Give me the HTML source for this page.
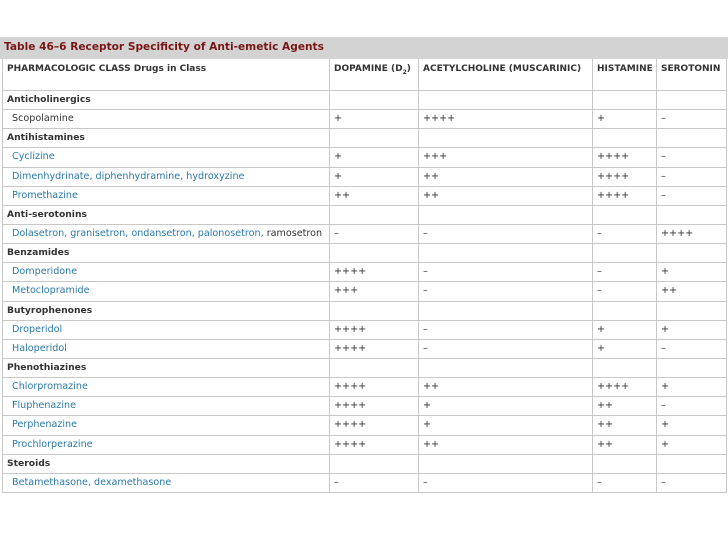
<!DOCTYPE html>
<html><head><meta charset="utf-8"><style>
body{margin:0;width:728px;height:546px;background:#fff;position:relative;overflow:hidden;font-family:"DejaVu Sans","Liberation Sans",sans-serif;font-size:9.6px;color:#333}
.title{position:absolute;left:0;top:37px;width:728px;height:22px;background:#d3d3d3;color:#7a1616;font-weight:bold;font-size:10.6px;line-height:20px;padding-left:4px;box-sizing:border-box}
.r{position:absolute;left:2px;width:724px;display:grid;grid-template-columns:327px 89px 174px 64px 70px;border-left:1px solid #c8c8c8;box-sizing:border-box}
.r div{border-right:1px solid #c8c8c8;border-bottom:1px solid #c8c8c8;padding-left:4px;line-height:18px;white-space:nowrap;overflow:hidden}
.h div{font-weight:bold;line-height:20px;font-size:9px}
.c{font-weight:bold;font-size:9.2px}
.d{padding-left:9px!important;color:#2a7aa8}
.k{color:#333}
sub{font-size:6px}
</style></head><body>
<div class="title">Table 46–6 Receptor Specificity of Anti-emetic Agents</div>
<div class="r h" style="top:59px;height:32px"><div>PHARMACOLOGIC CLASS Drugs in Class</div><div>DOPAMINE (D<sub>2</sub>)</div><div>ACETYLCHOLINE (MUSCARINIC)</div><div>HISTAMINE</div><div>SEROTONIN</div></div>
<div class="r" style="top:91px;height:19px"><div class="c">Anticholinergics</div><div></div><div></div><div></div><div></div></div>
<div class="r" style="top:110px;height:19px"><div class="d k">Scopolamine</div><div>+</div><div>++++</div><div>+</div><div>–</div></div>
<div class="r" style="top:129px;height:19px"><div class="c">Antihistamines</div><div></div><div></div><div></div><div></div></div>
<div class="r" style="top:148px;height:20px"><div class="d">Cyclizine</div><div>+</div><div>+++</div><div>++++</div><div>–</div></div>
<div class="r" style="top:168px;height:19px"><div class="d">Dimenhydrinate, diphenhydramine, hydroxyzine</div><div>+</div><div>++</div><div>++++</div><div>–</div></div>
<div class="r" style="top:187px;height:19px"><div class="d">Promethazine</div><div>++</div><div>++</div><div>++++</div><div>–</div></div>
<div class="r" style="top:206px;height:19px"><div class="c">Anti-serotonins</div><div></div><div></div><div></div><div></div></div>
<div class="r" style="top:225px;height:19px"><div class="d">Dolasetron, granisetron, ondansetron, palonosetron, <span class="k">ramosetron</span></div><div>–</div><div>–</div><div>–</div><div>++++</div></div>
<div class="r" style="top:244px;height:19px"><div class="c">Benzamides</div><div></div><div></div><div></div><div></div></div>
<div class="r" style="top:263px;height:19px"><div class="d">Domperidone</div><div>++++</div><div>–</div><div>–</div><div>+</div></div>
<div class="r" style="top:282px;height:20px"><div class="d">Metoclopramide</div><div>+++</div><div>–</div><div>–</div><div>++</div></div>
<div class="r" style="top:302px;height:19px"><div class="c">Butyrophenones</div><div></div><div></div><div></div><div></div></div>
<div class="r" style="top:321px;height:19px"><div class="d">Droperidol</div><div>++++</div><div>–</div><div>+</div><div>+</div></div>
<div class="r" style="top:340px;height:19px"><div class="d">Haloperidol</div><div>++++</div><div>–</div><div>+</div><div>–</div></div>
<div class="r" style="top:359px;height:19px"><div class="c">Phenothiazines</div><div></div><div></div><div></div><div></div></div>
<div class="r" style="top:378px;height:19px"><div class="d">Chlorpromazine</div><div>++++</div><div>++</div><div>++++</div><div>+</div></div>
<div class="r" style="top:397px;height:19px"><div class="d">Fluphenazine</div><div>++++</div><div>+</div><div>++</div><div>–</div></div>
<div class="r" style="top:416px;height:20px"><div class="d">Perphenazine</div><div>++++</div><div>+</div><div>++</div><div>+</div></div>
<div class="r" style="top:436px;height:19px"><div class="d">Prochlorperazine</div><div>++++</div><div>++</div><div>++</div><div>+</div></div>
<div class="r" style="top:455px;height:19px"><div class="c">Steroids</div><div></div><div></div><div></div><div></div></div>
<div class="r" style="top:474px;height:19px"><div class="d">Betamethasone, dexamethasone</div><div>–</div><div>–</div><div>–</div><div>–</div></div>
</body></html>
